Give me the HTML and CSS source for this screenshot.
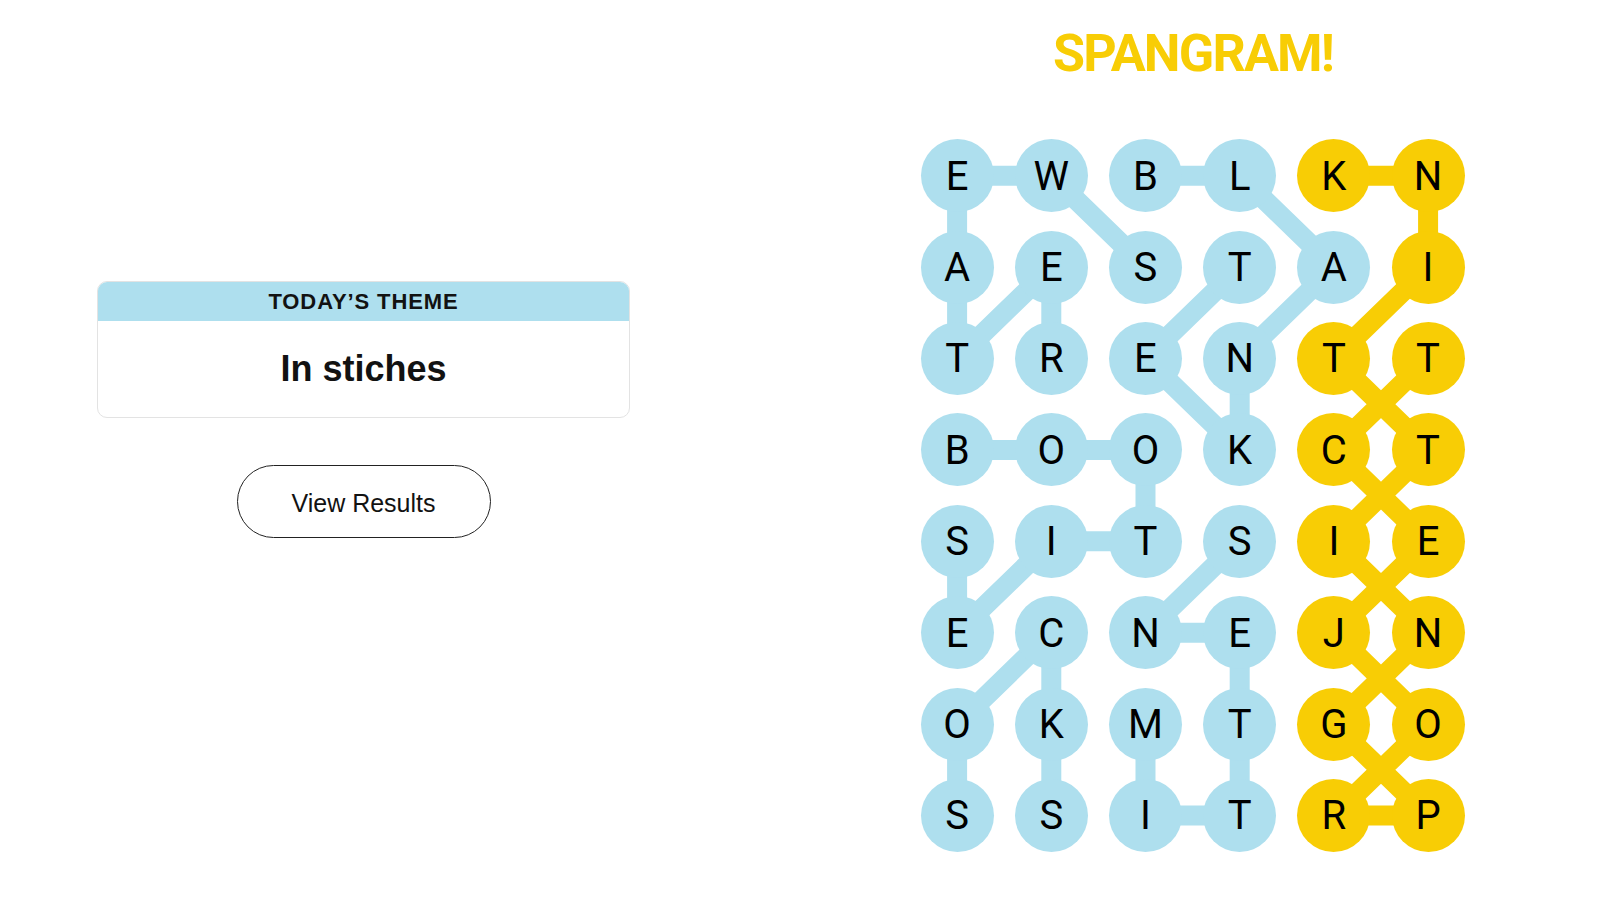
FILE: index.html
```html
<!DOCTYPE html>
<html lang="en">
<head>
<meta charset="utf-8">
<title>Strands</title>
<link rel="stylesheet" href="styles.css">
</head>
<body>
<div class="page">
  <section class="left">
    <div class="theme-card">
      <div class="theme-header">TODAY’S THEME</div>
      <div class="theme-body">In stiches</div>
    </div>
    <button class="results-btn">View Results</button>
  </section>
  <section class="right">
    <h1 class="spangram-title">SPANGRAM!</h1>
    <div class="board">
      <svg class="board-lines" viewBox="0 0 565.2 731.2" width="565.2" height="731.2">
        <g class="path-blue">
          <polyline points="235.5,137.1 141.3,45.7 47.1,45.7 47.1,137.1 47.1,228.5 141.3,137.1 141.3,228.5"/>
          <polyline points="235.5,45.7 329.7,45.7 423.9,137.1 329.7,228.5 329.7,319.9 235.5,228.5 329.7,137.1"/>
          <polyline points="47.1,319.9 141.3,319.9 235.5,319.9 235.5,411.3 141.3,411.3 47.1,502.7 47.1,411.3"/>
          <polyline points="235.5,594.1 235.5,685.5 329.7,685.5 329.7,594.1 329.7,502.7 235.5,502.7 329.7,411.3"/>
          <polyline points="47.1,685.5 47.1,594.1 141.3,502.7 141.3,594.1 141.3,685.5"/>
        </g>
        <g class="path-yellow">
          <polyline points="423.9,45.7 518.1,45.7 518.1,137.1 423.9,228.5 518.1,319.9 423.9,411.3 518.1,502.7 423.9,594.1 518.1,685.5 423.9,685.5 518.1,594.1 423.9,502.7 518.1,411.3 423.9,319.9 518.1,228.5"/>
        </g>
      </svg>
      <div class="grid">
        <div class="cell"><span class="dot blue">E</span></div>
        <div class="cell"><span class="dot blue">W</span></div>
        <div class="cell"><span class="dot blue">B</span></div>
        <div class="cell"><span class="dot blue">L</span></div>
        <div class="cell"><span class="dot yellow">K</span></div>
        <div class="cell"><span class="dot yellow">N</span></div>

        <div class="cell"><span class="dot blue">A</span></div>
        <div class="cell"><span class="dot blue">E</span></div>
        <div class="cell"><span class="dot blue">S</span></div>
        <div class="cell"><span class="dot blue">T</span></div>
        <div class="cell"><span class="dot blue">A</span></div>
        <div class="cell"><span class="dot yellow">I</span></div>

        <div class="cell"><span class="dot blue">T</span></div>
        <div class="cell"><span class="dot blue">R</span></div>
        <div class="cell"><span class="dot blue">E</span></div>
        <div class="cell"><span class="dot blue">N</span></div>
        <div class="cell"><span class="dot yellow">T</span></div>
        <div class="cell"><span class="dot yellow">T</span></div>

        <div class="cell"><span class="dot blue">B</span></div>
        <div class="cell"><span class="dot blue">O</span></div>
        <div class="cell"><span class="dot blue">O</span></div>
        <div class="cell"><span class="dot blue">K</span></div>
        <div class="cell"><span class="dot yellow">C</span></div>
        <div class="cell"><span class="dot yellow">T</span></div>

        <div class="cell"><span class="dot blue">S</span></div>
        <div class="cell"><span class="dot blue">I</span></div>
        <div class="cell"><span class="dot blue">T</span></div>
        <div class="cell"><span class="dot blue">S</span></div>
        <div class="cell"><span class="dot yellow">I</span></div>
        <div class="cell"><span class="dot yellow">E</span></div>

        <div class="cell"><span class="dot blue">E</span></div>
        <div class="cell"><span class="dot blue">C</span></div>
        <div class="cell"><span class="dot blue">N</span></div>
        <div class="cell"><span class="dot blue">E</span></div>
        <div class="cell"><span class="dot yellow">J</span></div>
        <div class="cell"><span class="dot yellow">N</span></div>

        <div class="cell"><span class="dot blue">O</span></div>
        <div class="cell"><span class="dot blue">K</span></div>
        <div class="cell"><span class="dot blue">M</span></div>
        <div class="cell"><span class="dot blue">T</span></div>
        <div class="cell"><span class="dot yellow">G</span></div>
        <div class="cell"><span class="dot yellow">O</span></div>

        <div class="cell"><span class="dot blue">S</span></div>
        <div class="cell"><span class="dot blue">S</span></div>
        <div class="cell"><span class="dot blue">I</span></div>
        <div class="cell"><span class="dot blue">T</span></div>
        <div class="cell"><span class="dot yellow">R</span></div>
        <div class="cell"><span class="dot yellow">P</span></div>
      </div>
    </div>
  </section>
</div>
</body>
</html>
```

FILE: styles.css
```css
html, body {
  margin: 0;
  padding: 0;
  background: #ffffff;
}

body {
  font-family: "Liberation Sans", Arial, sans-serif;
  color: #121212;
}

.page {
  display: flex;
  align-items: flex-start;
  padding-left: 97px;
  width: 1600px;
  height: 900px;
  box-sizing: border-box;
  overflow: hidden;
}

.left {
  width: 533px;
  padding-top: 281px;
  display: flex;
  flex-direction: column;
  align-items: center;
}

.theme-card {
  width: 533px;
  box-sizing: border-box;
  border: 1px solid #e3e3e3;
  border-radius: 10px;
  overflow: hidden;
  text-align: center;
}

.theme-header {
  background: #aedfee;
  height: 39px;
  box-sizing: border-box;
  padding-top: 1px;
  line-height: 38px;
  font-size: 22px;
  font-weight: 700;
  letter-spacing: 0.9px;
  color: #121212;
}

.theme-body {
  padding-top: 26px;
  padding-bottom: 26px;
  line-height: 44px;
  font-size: 36px;
  font-weight: 700;
  color: #121212;
}

.results-btn {
  margin-top: 47px;
  width: 254px;
  height: 73px;
  border: 1px solid #222;
  border-radius: 37px;
  background: #fff;
  font-family: "Liberation Sans", Arial, sans-serif;
  font-size: 25px;
  color: #121212;
  padding: 4px 0 0 0;
  cursor: pointer;
}

.right {
  margin-left: 280px;
  width: 566px;
  padding-top: 24px;
}

.spangram-title {
  margin: 0;
  height: 60px;
  line-height: 60px;
  text-align: center;
  font-family: Roboto, "Liberation Sans", sans-serif;
  font-weight: 700;
  font-size: 52px;
  letter-spacing: -1.8px;
  color: #f8cd05;
}

.board {
  position: relative;
  margin-top: 46px;
  width: 565.2px;
  height: 731.2px;
}

.board-lines {
  position: absolute;
  left: 0;
  top: 0;
  z-index: 0;
}

.board-lines polyline {
  fill: none;
  stroke-width: 20;
  stroke-linejoin: round;
  stroke-linecap: round;
}

.path-blue polyline {
  stroke: #aedfee;
}

.path-yellow polyline {
  stroke: #f8cd05;
}

.grid {
  position: relative;
  z-index: 1;
  display: grid;
  grid-template-columns: repeat(6, 94.2px);
  grid-template-rows: repeat(8, 91.4px);
}

.cell {
  display: flex;
  align-items: center;
  justify-content: center;
}

.dot {
  width: 73px;
  height: 73px;
  border-radius: 50%;
  display: flex;
  align-items: center;
  justify-content: center;
  font-family: Roboto, "Liberation Sans", sans-serif;
  font-size: 40px;
  font-weight: 400;
  line-height: 1;
  color: #000;
  padding-top: 2px;
  box-sizing: border-box;
}

.dot.blue {
  background: #aedfee;
}

.dot.yellow {
  background: #f8cd05;
}
```
